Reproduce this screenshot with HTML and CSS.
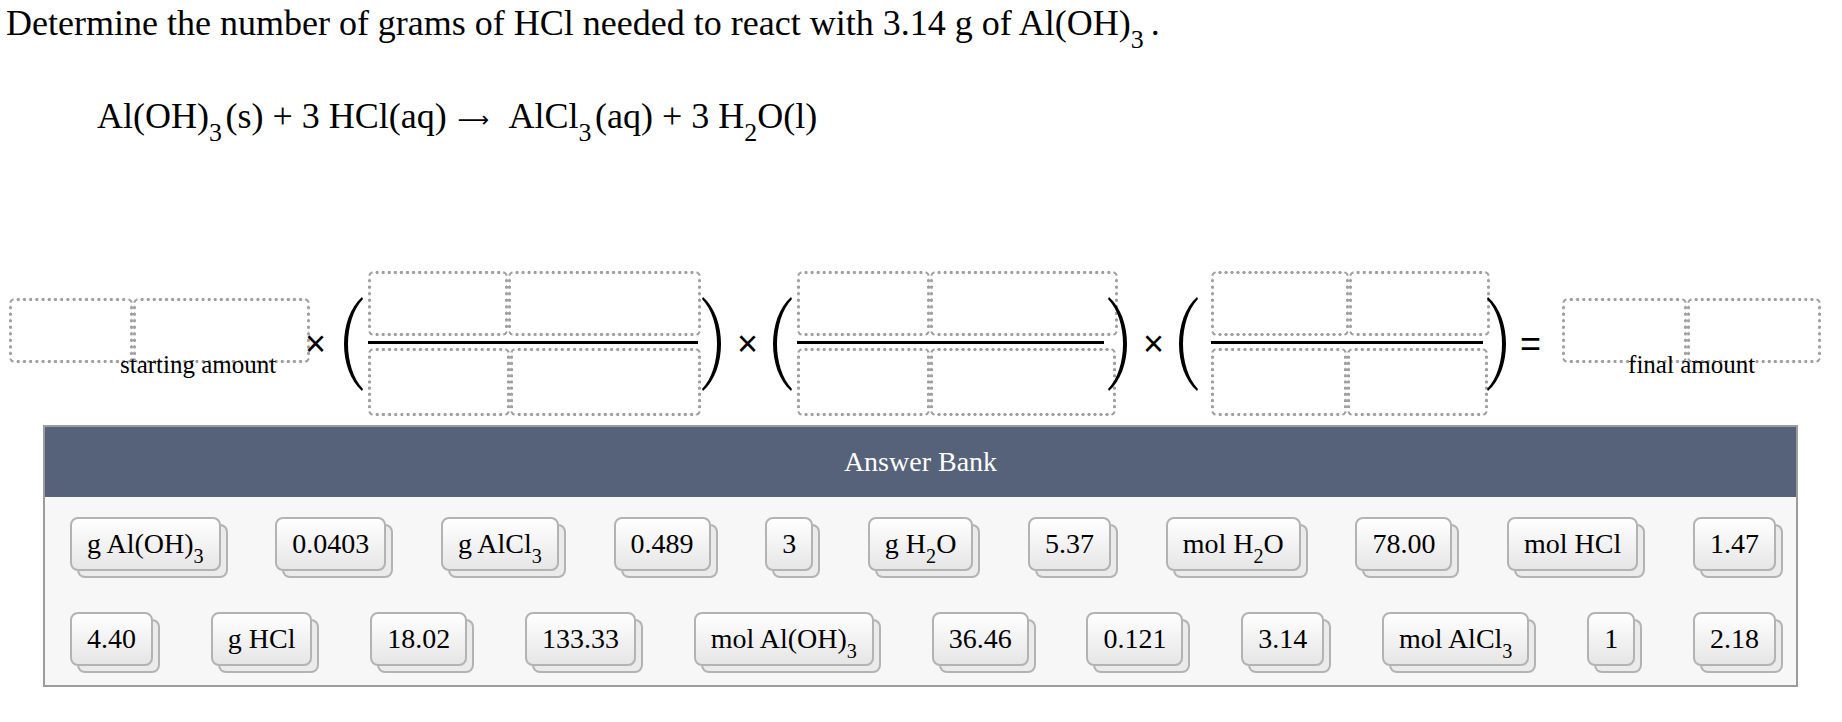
FILE: index.html
```html
<!DOCTYPE html>
<html lang="en">
<head>
<meta charset="utf-8">
<title>Dimensional analysis</title>
<link rel="stylesheet" href="styles.css">
</head>
<body>
  <p class="prompt">Determine the number of grams of HCl needed to react with 3.14 g of Al(OH)<span class="sub">3</span><span class="stop">.</span></p>

  <p class="reaction">Al(OH)<span class="sub sub--gap">3</span>(s) + 3 HCl(aq) <span class="arrow">&#x27F6;</span> AlCl<span class="sub sub--gap">3</span>(aq) + 3 H<span class="sub">2</span>O(l)</p>

  <div class="setup">
    <div class="term term--start">
      <div class="slots">
        <div class="slot w124"></div>
        <div class="slot w177"></div>
      </div>
      <div class="term-label term-label--start">starting amount</div>
    </div>

    <span class="op op--first">&times;</span>
    <svg class="paren paren--open" viewBox="0 0 22 96" width="22" height="96"><path d="M20 1 C-4 22 -4 74 20 95 L21 93 C1 72 1 24 21 3 Z"/></svg>
    <div class="frac frac--1">
      <div class="slots">
        <div class="slot w140"></div>
        <div class="slot w193"></div>
      </div>
      <div class="bar"></div>
      <div class="slots slots--low">
        <div class="slot w142"></div>
        <div class="slot w191"></div>
      </div>
    </div>
    <svg class="paren paren--close" viewBox="0 0 22 96" width="22" height="96"><path d="M2 1 C26 22 26 74 2 95 L1 93 C21 72 21 24 1 3 Z"/></svg>

    <span class="op">&times;</span>
    <svg class="paren paren--open" viewBox="0 0 22 96" width="22" height="96"><path d="M20 1 C-4 22 -4 74 20 95 L21 93 C1 72 1 24 21 3 Z"/></svg>
    <div class="frac frac--2">
      <div class="slots">
        <div class="slot w133"></div>
        <div class="slot w188"></div>
      </div>
      <div class="bar"></div>
      <div class="slots slots--low">
        <div class="slot w133"></div>
        <div class="slot w186"></div>
      </div>
    </div>
    <svg class="paren paren--close" viewBox="0 0 22 96" width="22" height="96"><path d="M2 1 C26 22 26 74 2 95 L1 93 C21 72 21 24 1 3 Z"/></svg>

    <span class="op">&times;</span>
    <svg class="paren paren--open" viewBox="0 0 22 96" width="22" height="96"><path d="M20 1 C-4 22 -4 74 20 95 L21 93 C1 72 1 24 21 3 Z"/></svg>
    <div class="frac frac--3">
      <div class="slots">
        <div class="slot w138"></div>
        <div class="slot w141"></div>
      </div>
      <div class="bar"></div>
      <div class="slots slots--low">
        <div class="slot w136"></div>
        <div class="slot w141"></div>
      </div>
    </div>
    <svg class="paren paren--close" viewBox="0 0 22 96" width="22" height="96"><path d="M2 1 C26 22 26 74 2 95 L1 93 C21 72 21 24 1 3 Z"/></svg>

    <span class="op op--equals">=</span>

    <div class="term term--final">
      <div class="slots">
        <div class="slot w125"></div>
        <div class="slot w134"></div>
      </div>
      <div class="term-label">final amount</div>
    </div>
  </div>

  <section class="bank">
    <header class="bank-head">Answer Bank</header>
    <div class="bank-body">
      <div class="chip-row">
        <span class="chip">g Al(OH)<span class="sub">3</span></span>
        <span class="chip">0.0403</span>
        <span class="chip">g AlCl<span class="sub">3</span></span>
        <span class="chip">0.489</span>
        <span class="chip">3</span>
        <span class="chip">g H<span class="sub">2</span>O</span>
        <span class="chip">5.37</span>
        <span class="chip">mol H<span class="sub">2</span>O</span>
        <span class="chip">78.00</span>
        <span class="chip">mol HCl</span>
        <span class="chip">1.47</span>
      </div>
      <div class="chip-row">
        <span class="chip">4.40</span>
        <span class="chip">g HCl</span>
        <span class="chip">18.02</span>
        <span class="chip">133.33</span>
        <span class="chip">mol Al(OH)<span class="sub">3</span></span>
        <span class="chip">36.46</span>
        <span class="chip">0.121</span>
        <span class="chip">3.14</span>
        <span class="chip">mol AlCl<span class="sub">3</span></span>
        <span class="chip">1</span>
        <span class="chip">2.18</span>
      </div>
    </div>
  </section>
</body>
</html>
```

FILE: styles.css
```css
/* Stoichiometry drag-and-drop question */

body {
  margin: 0;
  padding: 3px 6px 0;
  background: #fff;
  color: #000;
  font-family: "Liberation Serif", "Times New Roman", serif;
}

/* ---- question text ---- */

.prompt {
  margin: 0;
  font-size: 36px;
  line-height: 41px;
  white-space: nowrap;
}

.stop {
  margin-left: 0.2em;
}

.reaction {
  margin: 52px 0 0 91px;
  font-size: 36px;
  line-height: 41px;
  white-space: nowrap;
}

.sub {
  font-size: 0.72em;
  line-height: 0;
  vertical-align: -0.5em;
}

.sub--gap {
  margin-right: 0.14em;
}

.arrow {
  display: inline-block;
  margin: 0 12px 0 2px;
  font-family: "DejaVu Sans", sans-serif;
  font-size: 22px;
  vertical-align: 1px;
}

/* ---- conversion setup ---- */

.setup {
  display: flex;
  align-items: center;
  margin: 131px 0 0 3px;
}

.slots {
  display: flex;
}

.slots--low .slot {
  height: 68px;
}

/* drop target drawn as a ring of round grey dots */
.slot {
  --dot: radial-gradient(circle, #a0a0a0 1.4px, rgba(160, 160, 160, 0) 1.9px);
  flex: none;
  box-sizing: border-box;
  height: 65px;
  border-radius: 6px;
  background:
    var(--dot) left top / 6px 3px space no-repeat,
    var(--dot) left bottom / 6px 3px space no-repeat,
    var(--dot) left top / 3px 6px no-repeat space,
    var(--dot) right top / 3px 6px no-repeat space;
}

.w124 { width: 124px; }
.w125 { width: 125px; }
.w133 { width: 133px; }
.w134 { width: 134px; }
.w136 { width: 136px; }
.w138 { width: 138px; }
.w140 { width: 140px; }
.w141 { width: 141px; }
.w142 { width: 142px; }
.w177 { width: 177px; }
.w186 { width: 186px; }
.w188 { width: 188px; }
.w191 { width: 191px; }
.w193 { width: 193px; }

.term {
  display: flex;
  flex-direction: column;
  margin-bottom: 11px;
}

.term-label {
  margin-top: -13px;
  font-size: 25px;
  line-height: 29px;
  text-align: center;
  white-space: nowrap;
}

.term-label--start {
  padding-left: 111px;
  text-align: left;
}

.op {
  flex: none;
  margin: 0 13px 0 14px;
  font-family: "Liberation Sans", Arial, sans-serif;
  font-size: 36px;
  line-height: 1;
}

.op--first {
  margin: 0 16px 0 -5px;
}

.op--equals {
  margin: 0 21px 0 12px;
}

.paren {
  flex: none;
  display: block;
  fill: #000;
}

.paren--open {
  margin-right: 4px;
}

.paren--close {
  margin-left: 3px;
}

.frac {
  flex: none;
  display: flex;
  flex-direction: column;
}

.frac--1 { width: 330px; }
.frac--2 { width: 307px; }
.frac--3 { width: 272px; margin-left: 8px; }

.bar {
  height: 3px;
  margin: 5px 0 4px;
  background: #000;
}

/* ---- answer bank ---- */

.bank {
  box-sizing: border-box;
  width: 1755px;
  margin: 9px 0 0 37px;
  border: 2px solid #9c9c9c;
}

.bank-head {
  height: 70px;
  display: flex;
  align-items: center;
  justify-content: center;
  background: #556279;
  color: #fff;
  font-size: 28px;
}

.bank-body {
  display: flex;
  flex-direction: column;
  gap: 41px;
  padding: 20px 20px 19px 25px;
  background: #f7f7f7;
}

.chip-row {
  display: flex;
  justify-content: space-between;
}

.chip {
  box-sizing: border-box;
  height: 54px;
  padding: 0 15px;
  border: 2px solid #b3b3b3;
  border-radius: 8px;
  background: linear-gradient(#ffffff, #e6e6e6);
  box-shadow: 7px 7px 0 -2px #ebebeb, 7px 7px 0 0 #b3b3b3;
  font-size: 28px;
  line-height: 50px;
  white-space: nowrap;
}
```
